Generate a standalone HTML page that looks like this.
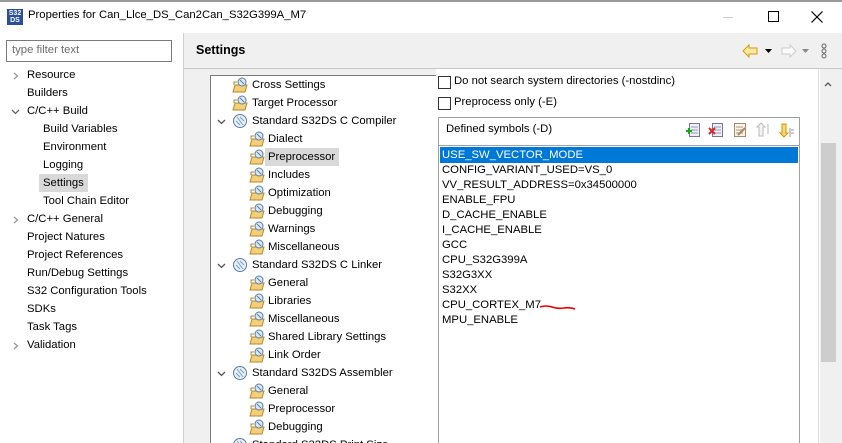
<!DOCTYPE html>
<html style="overflow:hidden;width:842px;height:443px"><head><meta charset="utf-8"><style>
*{margin:0;padding:0;box-sizing:border-box}
body{width:842px;height:443px;overflow:hidden;background:#f0f0f0;font-family:"Segoe UI","Liberation Sans",sans-serif;font-size:11.3px;color:#000;position:relative}
.a{position:absolute;white-space:nowrap}
.t{line-height:18px;height:18px}
.s{line-height:15px;height:15px;font-size:11.3px}
</style></head><body>
<div class="a" style="left:0;top:0;width:842px;height:33px;background:#fff;border-top:2px solid #999"></div>
<div class="a" style="left:7px;top:9px;width:16px;height:16px;background:#2a4f9a;color:#fff;font-size:7px;line-height:7px;text-align:center;font-weight:bold;padding-top:1px">S32<br>DS</div>
<div class="a" style="left:28px;top:9px;font-size:11.3px">Properties for Can_Llce_DS_Can2Can_S32G399A_M7</div>
<div class="a" style="left:723px;top:17px;width:10px;height:1px;background:#ccc"></div>
<div class="a" style="left:768px;top:11px;width:11px;height:11px;border:1px solid #000"></div>
<svg class="a" style="left:811px;top:11px" width="12" height="12"><path d="M0.5 0.5 L11.5 11.5 M11.5 0.5 L0.5 11.5" stroke="#000" stroke-width="1.2"/></svg>
<div class="a" style="left:0;top:33px;width:183px;height:410px;background:#fff"></div>
<div class="a" style="left:6px;top:40px;width:166px;height:22px;border:1px solid #7a7a7a;background:#fff;color:#6d6d6d;padding:3px 5px;font-size:11.3px">type filter text</div>
<div class="a" style="left:183px;top:33px;width:1px;height:410px;background:#d0d0d0"></div>
<div style="position:absolute;left:0;top:66px">
<svg class="a" style="left:13px;top:6px" width="6" height="8"><path d="M1 1 L4.5 4 L1 7" stroke="#999" fill="none" stroke-width="1.3"/></svg><div class="a t" style="left:27px;top:0">Resource</div>
<div class="a t" style="left:27px;top:18px">Builders</div>
<svg class="a" style="left:11px;top:43px" width="9" height="6"><path d="M1 1 L4.5 4.5 L8 1" stroke="#666" fill="none" stroke-width="1.3"/></svg><div class="a t" style="left:27px;top:36px">C/C++ Build</div>
<div class="a t" style="left:43px;top:54px">Build Variables</div>
<div class="a t" style="left:43px;top:72px">Environment</div>
<div class="a t" style="left:43px;top:90px">Logging</div>
<div class="a" style="left:39px;top:108px;width:49px;height:18px;background:#d9d9d9"></div>
<div class="a t" style="left:43px;top:108px">Settings</div>
<div class="a t" style="left:43px;top:126px">Tool Chain Editor</div>
<svg class="a" style="left:13px;top:150px" width="6" height="8"><path d="M1 1 L4.5 4 L1 7" stroke="#999" fill="none" stroke-width="1.3"/></svg><div class="a t" style="left:27px;top:144px">C/C++ General</div>
<div class="a t" style="left:27px;top:162px">Project Natures</div>
<div class="a t" style="left:27px;top:180px">Project References</div>
<div class="a t" style="left:27px;top:198px">Run/Debug Settings</div>
<div class="a t" style="left:27px;top:216px">S32 Configuration Tools</div>
<div class="a t" style="left:27px;top:234px">SDKs</div>
<div class="a t" style="left:27px;top:252px">Task Tags</div>
<svg class="a" style="left:13px;top:276px" width="6" height="8"><path d="M1 1 L4.5 4 L1 7" stroke="#999" fill="none" stroke-width="1.3"/></svg><div class="a t" style="left:27px;top:270px">Validation</div>
</div>
<div class="a" style="left:196px;top:43px;font-weight:bold;font-size:12.5px">Settings</div>
<div class="a" style="left:184px;top:68px;width:658px;height:1px;background:#c8c8c8"></div>
<svg class="a" style="left:742px;top:44px" width="16" height="14"><path d="M1 7 L7 1 L7 4 L15 4 L15 10 L7 10 L7 13 Z" fill="#fde8a8" stroke="#d89a00"/></svg>
<svg class="a" style="left:765px;top:49px" width="7" height="4"><path d="M0 0 L7 0 L3.5 4Z" fill="#000"/></svg>
<svg class="a" style="left:781px;top:44px" width="16" height="14"><path d="M15 7 L9 1 L9 4 L1 4 L1 10 L9 10 L9 13 Z" fill="#fafafa" stroke="#ccc"/></svg>
<svg class="a" style="left:802px;top:49px" width="7" height="4"><path d="M0 0 L7 0 L3.5 4Z" fill="#888"/></svg>
<svg class="a" style="left:821px;top:43px" width="6" height="16"><circle cx="3" cy="3" r="2" fill="none" stroke="#666"/><circle cx="3" cy="8" r="2" fill="none" stroke="#666"/><circle cx="3" cy="13" r="2" fill="none" stroke="#666"/></svg>
<div class="a" style="left:197px;top:69px;width:14px;height:374px;background:#f0f0f0"></div>
<div class="a" style="left:210px;top:75px;width:226px;height:368px;background:#fff;border-left:1px solid #7a7a7a;border-top:1px solid #7a7a7a;overflow:hidden">
<div id="tree" style="position:absolute;left:-210px;top:0"></div></div>
<div class="a" style="left:436px;top:69px;width:384px;height:374px;background:#fff"></div>
<div class="a" style="left:438px;top:76px;width:13px;height:13px;border:1px solid #333;background:#fff"></div>
<div class="a" style="left:454px;top:75px">Do not search system directories (-nostdinc)</div>
<div class="a" style="left:438px;top:97px;width:13px;height:13px;border:1px solid #333;background:#fff"></div>
<div class="a" style="left:454px;top:96px">Preprocess only (-E)</div>
<div class="a" style="left:438px;top:117px;width:362px;height:330px;border:1px solid #a0a0a0;background:#fff"></div>
<div class="a" style="left:439px;top:145px;width:360px;height:1px;background:#a0a0a0"></div>
<div class="a" style="left:446px;top:123px">Defined symbols (-D)</div>
<svg class="a" style="left:685px;top:122px" width="16" height="16"><rect x="4.5" y="1.5" width="10" height="13" fill="#eef" stroke="#778"/><path d="M6 5h7M6 8h7M6 11h7" stroke="#99a"/><path d="M1 9h6M4 6v6" stroke="#1a1" stroke-width="2"/></svg>
<svg class="a" style="left:708px;top:122px" width="16" height="16"><rect x="4.5" y="1.5" width="10" height="13" fill="#eef" stroke="#778"/><path d="M6 5h7M6 8h7M6 11h7" stroke="#99a"/><path d="M1 6l6 6M7 6l-6 6" stroke="#d22" stroke-width="2"/></svg>
<svg class="a" style="left:732px;top:122px" width="16" height="16"><rect x="2.5" y="1.5" width="11" height="13" fill="#fff4d8" stroke="#a87"/><path d="M4 5h7M4 8h7M4 11h7" stroke="#99a"/><path d="M6 13 L13 6" stroke="#a86" stroke-width="2"/></svg>
<svg class="a" style="left:755px;top:122px" width="16" height="16"><path d="M6 1 L10 5 L8 5 L8 14 L4 14 L4 5 L2 5Z" fill="#f4f4f4" stroke="#bbb"/><path d="M13 2v10" stroke="#bbb"/></svg>
<svg class="a" style="left:778px;top:122px" width="16" height="16"><path d="M6 15 L10 11 L8 11 L8 2 L4 2 L4 11 L2 11Z" fill="#fdd870" stroke="#c90"/><path d="M12 6v9M13 8h3M13 11h3" stroke="#99a"/></svg>
<div class="a" style="left:440px;top:147px;width:358px;height:16px;background:#0078d7"></div>
<div style="position:absolute;left:442px;top:148px">
<div class="s" style="color:#fff">USE_SW_VECTOR_MODE</div>
<div class="s">CONFIG_VARIANT_USED=VS_0</div>
<div class="s">VV_RESULT_ADDRESS=0x34500000</div>
<div class="s">ENABLE_FPU</div>
<div class="s">D_CACHE_ENABLE</div>
<div class="s">I_CACHE_ENABLE</div>
<div class="s">GCC</div>
<div class="s">CPU_S32G399A</div>
<div class="s">S32G3XX</div>
<div class="s">S32XX</div>
<div class="s">CPU_CORTEX_M7</div>
<div class="s">MPU_ENABLE</div>
</div>
<svg class="a" style="left:538px;top:302px" width="40" height="10"><path d="M2 5 Q8 3 14 5 T26 6 T37 7" stroke="#e00" stroke-width="1.6" fill="none"/></svg>
<div class="a" style="left:818px;top:69px;width:1px;height:374px;background:#ddd"></div>
<div class="a" style="left:820px;top:69px;width:22px;height:374px;background:#f0f0f0"></div>
<div class="a" style="left:821px;top:143px;width:15px;height:219px;background:#cdcdcd"></div>
<svg class="a" style="left:824px;top:82px" width="8" height="5"><path d="M1 4 L4 1 L7 4" stroke="#555" fill="none" stroke-width="1.3"/></svg>
<script>
var items=[[0,"Cross Settings",1],[0,"Target Processor",1],[1,"Standard S32DS C Compiler",0],[0,"Dialect",2],[0,"Preprocessor",2,1],[0,"Includes",2],[0,"Optimization",2],[0,"Debugging",2],[0,"Warnings",2],[0,"Miscellaneous",2],[1,"Standard S32DS C Linker",0],[0,"General",2],[0,"Libraries",2],[0,"Miscellaneous",2],[0,"Shared Library Settings",2],[0,"Link Order",2],[1,"Standard S32DS Assembler",0],[0,"General",2],[0,"Preprocessor",2],[0,"Debugging",2],[1,"Standard S32DS Print Size",0]];
var h="";items.forEach(function(it,i){var y=i*18;var lvl=it[2];
var ix=lvl==2?248:231,tx=lvl==2?267:251;
if(it[0]){h+='<svg class="a" style="left:216px;top:'+(y+7)+'px" width="9" height="6"><path d="M1 1 L4.5 4.5 L8 1" stroke="#555" fill="none" stroke-width="1.3"/></svg>';
h+='<svg class="a" style="left:231px;top:'+(y+1)+'px" width="16" height="16"><circle cx="8" cy="8" r="6.5" fill="#e8f0f8" stroke="#5a7fa0"/><path d="M5 4 L11 12 M4 8 L8 12 M8 4 L12 8" stroke="#7a9fc0"/></svg>';}
else{h+='<svg class="a" style="left:'+ix+'px;top:'+(y+1)+'px" width="16" height="16"><path d="M1 15 L3 8 L15 8 L13 15 Z" fill="#f3cf7a" stroke="#b8862a"/><path d="M2 8 L2 5 L5 5" fill="none" stroke="#b8862a"/><circle cx="10" cy="5" r="4" fill="#dde8f2" stroke="#5a7fa0"/><path d="M8 3 L12 7" stroke="#5a7fa0"/></svg>';}
if(it[3])h+='<div class="a" style="left:'+(tx-3)+'px;top:'+y+'px;width:74px;height:18px;background:#d9d9d9"></div>';
h+='<div class="a t" style="left:'+tx+'px;top:'+y+'px">'+it[1]+'</div>';});
document.getElementById("tree").innerHTML=h;
</script>
</body></html>
